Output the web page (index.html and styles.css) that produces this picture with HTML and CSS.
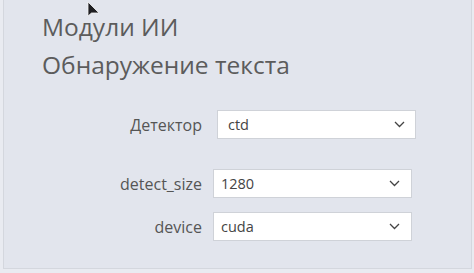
FILE: index.html
```html
<!DOCTYPE html>
<html lang="ru">
<head>
<meta charset="utf-8">
<title>Модули ИИ</title>
<link rel="stylesheet" href="styles.css">
</head>
<body>
<div class="panel">
  <div class="headings">
    <div class="title">Модули ИИ</div>
    <div class="title">Обнаружение текста</div>
  </div>
  <div class="row row-first">
    <div class="label">Детектор</div>
    <div class="select select-wide">
      <span class="value">ctd</span>
      <svg class="chev" width="11" height="7" viewBox="0 0 11 7"><path d="M1 1 L5.5 5.5 L10 1" fill="none" stroke="#444" stroke-width="1.3"/></svg>
    </div>
  </div>
  <div class="params">
    <div class="row">
      <div class="label">detect_size</div>
      <div class="select">
        <span class="value">1280</span>
        <svg class="chev" width="11" height="7" viewBox="0 0 11 7"><path d="M1 1 L5.5 5.5 L10 1" fill="none" stroke="#444" stroke-width="1.3"/></svg>
      </div>
    </div>
    <div class="row">
      <div class="label">device</div>
      <div class="select">
        <span class="value">cuda</span>
        <svg class="chev" width="11" height="7" viewBox="0 0 11 7"><path d="M1 1 L5.5 5.5 L10 1" fill="none" stroke="#444" stroke-width="1.3"/></svg>
      </div>
    </div>
  </div>
</div>
<svg class="cursor" width="14" height="18" viewBox="0 0 14 18"><path d="M1 0 L1 14 L4.5 11 L12 11 Z" fill="#1e1e22" stroke="#f4f4f4" stroke-width="0.8"/></svg>
</body>
</html>
```

FILE: styles.css
```css
html, body {
  margin: 0;
  padding: 0;
}
body {
  width: 474px;
  height: 273px;
  background: #e9ebf1;
  font-family: "Open Sans", "Noto Sans", sans-serif;
  color: #555;
  overflow: hidden;
  position: relative;
}
.panel {
  margin-left: 3px;
  width: 469px;
  height: 269px;
  box-sizing: border-box;
  background: #e2e5ed;
  border: 1px solid #d4d7de;
  border-top: none;
}
.headings {
  padding-left: 38px;
  padding-top: 7.5px;
}
.title {
  font-size: 24.5px;
  line-height: 38px;
  color: #5c5c5c;
}
.row {
  display: flex;
  align-items: center;
  gap: 11px;
}
.row-first {
  gap: 15px;
  margin-top: 26.5px;
}
.params {
  margin-top: 30px;
  display: flex;
  flex-direction: column;
  gap: 14px;
}
.label {
  width: 198px;
  text-align: right;
  font-size: 16px;
  color: #555;
}
.select {
  width: 199px;
  height: 29px;
  box-sizing: border-box;
  background: #fff;
  border: 1px solid #cfd2d8;
  display: flex;
  align-items: center;
  justify-content: space-between;
  padding: 0 11px 0 7px;
  font-size: 14.5px;
  color: #444;
}
.select-wide {
  padding-left: 10px;
  padding-right: 10px;
}
.chev {
  display: block;
}
.cursor {
  position: absolute;
  left: 87px;
  top: 2px;
}
```
